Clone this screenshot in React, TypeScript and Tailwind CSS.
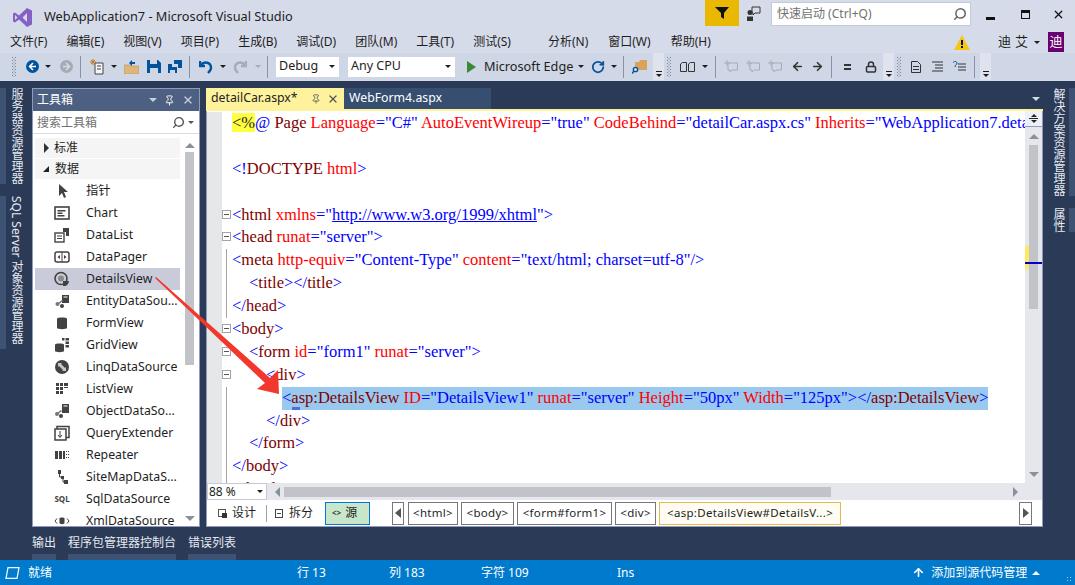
import React from "react";
import { Search, X, Pin, ArrowLeft, ArrowRight, ArrowUp, RotateCw, Lock } from "lucide-react";

const b = "text-[#0000ff]";
const m = "text-[#800000]";
const r = "text-[#ff0000]";

type Tok = [string, string];
type Fold = "box" | "line" | "end" | "none";

const codeLines: { indent: string; fold: Fold; toks: Tok[] }[] = [
  {
    indent: "pl-0",
    fold: "none",
    toks: [
      [b, "@"], [m, " Page"], [r, " Language"], [b, '="C#"'], [r, " AutoEventWireup"], [b, '="true"'],
      [r, " CodeBehind"], [b, '="detailCar.aspx.cs"'], [r, " Inherits"], [b, '="WebApplication7.detailCar" %>'],
    ],
  },
  { indent: "pl-0", fold: "none", toks: [] },
  { indent: "pl-0", fold: "none", toks: [[b, "<!"], [m, "DOCTYPE"], [r, " html"], [b, ">"]] },
  { indent: "pl-0", fold: "none", toks: [] },
  { indent: "pl-0", fold: "box", toks: [[b, "<"], [m, "html"], [r, " xmlns"], [b, '="'], [b + " underline", "http://www.w3.org/1999/xhtml"], [b, '">']] },
  { indent: "pl-0", fold: "box", toks: [[b, "<"], [m, "head"], [r, " runat"], [b, '="server">']] },
  { indent: "pl-0", fold: "line", toks: [[b, "<"], [m, "meta"], [r, " http-equiv"], [b, '="Content-Type"'], [r, " content"], [b, '="text/html; charset=utf-8"/>']] },
  { indent: "pl-[17px]", fold: "line", toks: [[b, "<"], [m, "title"], [b, "></"], [m, "title"], [b, ">"]] },
  { indent: "pl-0", fold: "end", toks: [[b, "</"], [m, "head"], [b, ">"]] },
  { indent: "pl-0", fold: "box", toks: [[b, "<"], [m, "body"], [b, ">"]] },
  { indent: "pl-[17px]", fold: "box", toks: [[b, "<"], [m, "form"], [r, " id"], [b, '="form1"'], [r, " runat"], [b, '="server">']] },
  { indent: "pl-[34px]", fold: "box", toks: [[b, "<"], [m, "div"], [b, ">"]] },
  { indent: "pl-[50px]", fold: "line", toks: [] },
  { indent: "pl-[34px]", fold: "end", toks: [[b, "</"], [m, "div"], [b, ">"]] },
  { indent: "pl-[17px]", fold: "end", toks: [[b, "</"], [m, "form"], [b, ">"]] },
  { indent: "pl-0", fold: "end", toks: [[b, "</"], [m, "body"], [b, ">"]] },
  { indent: "pl-0", fold: "line", toks: [[b, "</"], [m, "html"], [b, ">"]] },
];

const selToks: Tok[] = [
  [b, "<"], [m, "asp:DetailsView"], [r, " ID"], [b, '="DetailsView1"'], [r, " runat"], [b, '="server"'],
  [r, " Height"], [b, '="50px"'], [r, " Width"], [b, '="125px"></'], [m, "asp:DetailsView"], [b, ">"],
];

function Caret({ className = "", color = "border-t-[#1e1e1e]" }: { className?: string; color?: string }) {
  return <div className={`w-0 h-0 border-x-[3px] border-x-transparent border-t-[3px] ${color} ${className}`} />;
}

function BigCaret({ className = "", color = "border-t-[#1e1e1e]" }: { className?: string; color?: string }) {
  return <div className={`w-0 h-0 border-x-[4px] border-x-transparent border-t-[4px] ${color} ${className}`} />;
}

function Sep({ className = "" }: { className?: string }) {
  return <div className={`w-px h-[22px] bg-[#8a92a5] ${className}`} />;
}

function Gripper({ className = "" }: { className?: string }) {
  return (
    <svg className={className} width="5" height="20" viewBox="0 0 5 20">
      {[0, 3, 6, 9, 12, 15, 18].map((y) => (
        <g key={y} fill="#7d879c">
          <rect x="0" y={y} width="1" height="1" />
          <rect x="3" y={y} width="1" height="1" />
          <rect x="1.5" y={y + 1.5} width="1" height="1" />
        </g>
      ))}
    </svg>
  );
}

function Overflow({ className = "" }: { className?: string }) {
  return (
    <div className={`w-[11px] h-[27px] bg-[#dfe3ee] flex flex-col items-center justify-end pb-[3px] gap-[2px] ${className}`}>
      <div className="w-[6px] h-px bg-[#1e1e1e]" />
      <Caret />
    </div>
  );
}

function ToolIcon({ name }: { name: string }) {
  const f = "#424242";
  const shapes: Record<string, React.ReactNode> = {
    pointer: <path d="M5 1v12l3-3 2 5 2-1-2-5h4z" fill={f} />,
    chart: (
      <g>
        <rect x="1" y="2" width="14" height="12" fill="none" stroke={f} strokeWidth="1.6" />
        <path d="M3.5 5h8v1.5h-8zM3.5 7.5h5V9h-5zM3.5 10h7v1.5h-7z" fill={f} />
      </g>
    ),
    datalist: (
      <g>
        <rect x="1" y="6" width="9" height="9" fill="none" stroke={f} strokeWidth="1.4" />
        <path d="M3 8.5h5v1H3zM3 11h5v1H3z" fill={f} />
        <path d="M9 1h6v8h-3V5H9z" fill={f} />
      </g>
    ),
    pager: (
      <g>
        <rect x="1" y="3" width="14" height="10" rx="2" fill="none" stroke={f} strokeWidth="1.5" />
        <path d="M8 3v10" stroke={f} />
        <path d="M6 6v4L3.5 8zM10 6v4l2.5-2z" fill={f} />
      </g>
    ),
    details: (
      <g>
        <circle cx="7" cy="7.5" r="6" fill="none" stroke={f} strokeWidth="1.6" />
        <circle cx="7" cy="7.5" r="3" fill="#8a8a8a" />
        <path d="M9 10h6a5 5 0 0 1-6 5z" fill={f} />
      </g>
    ),
    entity: (
      <g>
        <path d="M8 2h7v8H8z" fill={f} />
        <rect x="9.5" y="3.5" width="4" height="1" fill="#fff" />
        <circle cx="3.5" cy="11" r="2" fill="#777" />
        <circle cx="8" cy="13" r="2" fill={f} />
        <path d="M4 10l4-3 1 1-4 3z" fill="#777" />
      </g>
    ),
    form: <path d="M3 3.5C3 2 13 2 13 3.5v9.5c0 1.500-10 1.500-10 0z" fill={f} />,
    grid: (
      <g>
        <path d="M1 7.500C1 6 10 6 10 7.500V14c0 1.500-9 1.500-9 0z" fill={f} />
        <path d="M8 1h2.500v2.500H8zM11.500 1H15v2.500h-3.500zM11.500 4.500H15V7h-3.500zM11.500 8H15v2.500h-3.500z" fill={f} />
      </g>
    ),
    linq: (
      <g>
        <circle cx="8" cy="8" r="7" fill={f} />
        <path d="M4 4l4 0-1 1 4 4 1-1 0 4-4 0 1-1-4-4-1 1z" fill="#c8c8c8" />
      </g>
    ),
    list: <path d="M2 2h3v3H2zM6 2h3v3H6zM10 2h4v3h-4zM2 6h3v3H2zM6 6h3v3H6zM10 6h4v1h-4zM2 10h3v3H2zM6 10h3v3H6z" fill={f} />,
    object: (
      <g>
        <path d="M8 1h7v9H8z" fill={f} />
        <rect x="9.500" y="2.500" width="4" height="1" fill="#fff" />
        <circle cx="3" cy="11" r="2" fill="#777" />
        <circle cx="7" cy="13" r="2" fill={f} />
        <path d="M3 10l4-3 1 1-4 3z" fill="#777" />
      </g>
    ),
    query: (
      <g>
        <rect x="3" y="1.500" width="12" height="11" fill="none" stroke={f} strokeWidth="1.500" />
        <rect x="1" y="4" width="11" height="11" fill="#fff" stroke={f} strokeWidth="1.500" />
        <path d="M6 6v6M4 10l2 2.500L8 10" stroke={f} fill="none" />
      </g>
    ),
    repeater: <path d="M1 4h3v8H1zM5 4h3v8H5zM9 4h2v8H9zM12 4h1v1h-1zM14 4h1v1h-1zM12 7h1v1h-1zM14 7h1v1h-1zM12 10h1v1h-1zM14 10h1v1h-1z" fill={f} />,
    sitemap: (
      <g>
        <path d="M4 1h3v4H4zM7 7h3v3H7zM10 11h4v4h-4z" fill={f} />
        <path d="M5.500 5v3H8M9 10v3h2" stroke={f} fill="none" />
      </g>
    ),
    xml: (
      <g>
        <path d="M5.500 5.500C5.500 4 10.500 4 10.500 5.500V10c0 1.500-5 1.500-5 0z" fill={f} />
        <path d="M3 5.500L1 8l2 2.500M13 5.500L15 8l-2 2.500" stroke={f} fill="none" />
      </g>
    ),
  };
  return (
    <svg width="16" height="16" viewBox="0 0 16 16">
      {shapes[name]}
    </svg>
  );
}

const toolItems: { icon: string; label: string; selected?: boolean }[] = [
  { icon: "pointer", label: "指针" },
  { icon: "chart", label: "Chart" },
  { icon: "datalist", label: "DataList" },
  { icon: "pager", label: "DataPager" },
  { icon: "details", label: "DetailsView", selected: true },
  { icon: "entity", label: "EntityDataSou..." },
  { icon: "form", label: "FormView" },
  { icon: "grid", label: "GridView" },
  { icon: "linq", label: "LinqDataSource" },
  { icon: "list", label: "ListView" },
  { icon: "object", label: "ObjectDataSo..." },
  { icon: "query", label: "QueryExtender" },
  { icon: "repeater", label: "Repeater" },
  { icon: "sitemap", label: "SiteMapDataS..." },
  { icon: "sql", label: "SqlDataSource" },
  { icon: "xml", label: "XmlDataSource" },
];

const menus = ["文件(F)", "编辑(E)", "视图(V)", "项目(P)", "生成(B)", "调试(D)", "团队(M)", "工具(T)", "测试(S)"];
const menus2 = ["分析(N)", "窗口(W)", "帮助(H)"];
const crumbs = [
  { text: "<html>", w: "w-[50px]" },
  { text: "<body>", w: "w-[53px]" },
  { text: "<form#form1>", w: "w-[95px]" },
  { text: "<div>", w: "w-[41px]" },
];

function VerticalTab({ text, height, side }: { text: string; height: string; side: "left" | "right" }) {
  return (
    <div className={`flex ${height} ${side === "left" ? "flex-row" : "flex-row-reverse"}`}>
      <div className="w-[6px] h-full bg-[#3e5273]" />
      <div className={`w-[20px] text-[12px] leading-[20px] text-[#e6e9f0] [writing-mode:vertical-rl] whitespace-nowrap ${side === "left" ? "ml-0" : "mr-[1px]"}`}>{text}</div>
    </div>
  );
}

function FoldCell({ fold }: { fold: Fold }) {
  if (fold === "none") return <div className="w-[10px] shrink-0" />;
  return (
    <div className="w-[10px] shrink-0 h-full flex flex-col items-center">
      {fold === "box" ? (
        <div className="w-[9px] h-[9px] mt-[6px] mr-[2px] border border-[#a5a5a5] bg-white flex items-center justify-center shrink-0">
          <div className="w-[5px] h-px bg-[#555]" />
        </div>
      ) : (
        <div className="w-px h-full bg-[#a5a5a5] mr-[2px]" />
      )}
    </div>
  );
}

export default function App() {
  return (
    <div className="w-[1075px] h-[585px] overflow-hidden relative flex flex-col bg-[#d6dbe9] text-[#1e1e1e] text-[12px] [font-family:'Noto_Sans','Noto_Sans_CJK_SC',sans-serif]">
      {/* title bar */}
      <div className="h-[31px] flex items-start shrink-0">
        <svg className="ml-[12px] mt-[7px]" width="21" height="21" viewBox="0 0 21 21">
          <path d="M15 1l5 2.500v14L15 20 7 12.500 3 15.500 1 14.500V6.500l2-1 4 3zM15 6l-4.500 4.500L15 15z" fill="#8661c5" fillRule="evenodd" />
          <path d="M3 8v5l2.500-2.500z" fill="#d6dbe9" />
        </svg>
        <div className="ml-[11px] mt-[6px] text-[12.750px] leading-[20px]">WebApplication7 - Microsoft Visual Studio</div>
        <div className="ml-auto w-[34px] h-[26px] bg-[#e8b900] flex items-center justify-center">
          <svg width="14" height="14" viewBox="0 0 14 14">
            <path d="M0 1h14L9 7v6L6 11V7z" fill="#111" />
          </svg>
        </div>
        <svg className="ml-[7px] mt-[6px]" width="15" height="15" viewBox="0 0 15 15">
          <circle cx="4" cy="6.500" r="2.500" fill="#333" />
          <path d="M1 15v-4.500h6V15z" fill="#333" />
          <path d="M6 1h8v6H9l-2 2V7H6z" fill="none" stroke="#333" />
        </svg>
        <div className="ml-[10px] mt-[2px] w-[200px] h-[24px] bg-white border border-[#c4cad8] flex items-center pl-[5px] pr-[3px]">
          <span className="text-[#717171] text-[12px]">快速启动 (Ctrl+Q)</span>
          <Search className="ml-auto -scale-x-100" size={14} strokeWidth={2.6} color="#666" />
        </div>
        <div className="ml-[15px] mt-[17px] w-[9px] h-[3px] bg-[#111]" />
        <div className="ml-[26px] mt-[10px] w-[9px] h-[9px] border border-[#111] border-t-[3px]" />
        <X className="ml-[22px] mt-[8px]" size={13} strokeWidth={2.2} color="#111" />
        <div className="w-[10px]" />
      </div>

      {/* menu bar */}
      <div className="h-[22px] flex items-center shrink-0 pl-[10px]">
        <div className="flex gap-[19px]">
          {menus.map((t) => (
            <span key={t} className="whitespace-nowrap">{t}</span>
          ))}
        </div>
        <div className="flex gap-[20px] ml-[37px]">
          {menus2.map((t) => (
            <span key={t} className="whitespace-nowrap">{t}</span>
          ))}
        </div>
        <svg className="ml-auto" width="16" height="15" viewBox="0 0 16 15">
          <path d="M8 0l8 15H0z" fill="#f5c518" />
          <path d="M7 5h2v5H7zM7 11h2v2H7z" fill="#111" />
        </svg>
        <span className="ml-[28px] tracking-[4px] text-[13px]">迪艾</span>
        <Caret className="ml-[2px]" />
        <div className="ml-[8px] w-[16px] h-[20px] bg-[#68006f] text-white text-[13px] flex items-center justify-center">迪</div>
        <div className="w-[11px]" />
      </div>

      {/* toolbar */}
      <div className="h-[27px] mb-[1px] flex items-center shrink-0 bg-[#cfd6e5]">
        <Gripper className="ml-[12px]" />
        <svg className="ml-[9px]" width="13" height="13" viewBox="0 0 13 13">
          <circle cx="6.500" cy="6.500" r="6.500" fill="#00539c" />
          <path d="M7 3L3.500 6.500 7 10M4 6.500h6" stroke="#fff" strokeWidth="1.500" fill="none" />
        </svg>
        <Caret className="ml-[6px]" />
        <svg className="ml-[9px]" width="13" height="13" viewBox="0 0 13 13">
          <circle cx="6.500" cy="6.500" r="6.500" fill="#a7abb5" />
          <path d="M6 3l3.500 3.500L6 10M9 6.500H3" stroke="#d6dbe9" strokeWidth="1.500" fill="none" />
        </svg>
        <Sep className="ml-[7px]" />
        <svg className="ml-[9px]" width="14" height="16" viewBox="0 0 14 16">
          <path d="M5 4h8v11H5z" fill="#f6f6f6" stroke="#424242" />
          <path d="M7 7h4M7 10h4" stroke="#424242" />
          <path d="M3 0v6M0 3h6M1 1l4 4M5 1L1 5" stroke="#c27d1a" />
        </svg>
        <Caret className="ml-[7px]" />
        <svg className="ml-[7px]" width="15" height="14" viewBox="0 0 15 14">
          <path d="M0 5h6l1 1h8v8H0z" fill="#dcb67a" stroke="#b08a4c" strokeWidth=".5" />
          <path d="M5 3l3-3v2h3v2H8v2z" fill="#00539c" />
        </svg>
        <svg className="ml-[8px]" width="14" height="13" viewBox="0 0 14 13">
          <path d="M0 0h11l3 3v10H0z" fill="#00539c" />
          <path d="M3 0h7v4H3zM3 8h8v5H3z" fill="#cfd6e5" />
        </svg>
        <svg className="ml-[7px]" width="14" height="13" viewBox="0 0 14 13">
          <path d="M0 4h4V7h5v6H0z" fill="#00539c" />
          <path d="M6 0h8v8h-4V4H6z" fill="#00539c" />
          <path d="M2 10h5v3H2z" fill="#cfd6e5" />
        </svg>
        <Sep className="ml-[7px]" />
        <svg className="ml-[9px]" width="14" height="15" viewBox="0 0 14 15">
          <path d="M1 2v5h5M2 6c3-4 10-3 10 3 0 2-1 3-3 5" stroke="#00539c" strokeWidth="2.400" fill="none" />
        </svg>
        <Caret className="ml-[7px]" />
        <svg className="ml-[7px]" width="14" height="15" viewBox="0 0 14 15">
          <path d="M13 2v5H8M12 6C9 2 2 3 2 9c0 2 1 3 3 5" stroke="#a7abb5" strokeWidth="2.400" fill="none" />
        </svg>
        <Caret className="ml-[8px]" color="border-t-[#a7abb5]" />
        <Sep className="ml-[6px]" />
        <div className="ml-[7px] w-[65px] h-[22px] bg-white border border-[#cfd6e5] flex items-center pl-[3px] pr-[4px] text-[12.500px]">
          Debug
          <Caret className="ml-auto" />
        </div>
        <div className="ml-[7px] w-[109px] h-[22px] bg-white border border-[#cfd6e5] flex items-center pl-[3px] pr-[4px] text-[12.500px]">
          Any CPU
          <Caret className="ml-auto" />
        </div>
        <div className="ml-[11px] w-0 h-0 border-y-[6px] border-y-transparent border-l-[9px] border-l-[#388a34]" />
        <span className="ml-[8px] text-[12.700px] whitespace-nowrap w-[91px]">Microsoft Edge</span>
        <Caret className="ml-[3px]" />
        <RotateCw className="ml-[7px]" size={14} strokeWidth={3} color="#00539c" />
        <Caret className="ml-[6px]" />
        <Sep className="ml-[6px]" />
        <svg className="ml-[8px]" width="15" height="15" viewBox="0 0 15 15">
          <path d="M3 3h4l1-2h7v10H5V8H3z" fill="#d9a35b" />
          <circle cx="3.500" cy="10.500" r="2.200" fill="none" stroke="#00539c" strokeWidth="1.300" />
          <path d="M2 12l-2 2.500" stroke="#00539c" strokeWidth="1.500" />
        </svg>
        <Overflow className="ml-[6px]" />
        <Gripper className="ml-[3px]" />
        <svg className="ml-[8px]" width="15" height="10" viewBox="0 0 15 10">
          <path d="M.5 9.500V2l2-1.500h4v9zM8.500 9.500V2l2-1.500h4v9z" fill="none" stroke="#333" />
        </svg>
        <Caret className="ml-[7px]" />
        <Sep className="ml-[7px]" />
        {[0, 1, 2].map((i) => (
          <svg key={i} className="ml-[8px]" width="14" height="13" viewBox="0 0 14 13">
            <path d="M4 3h9.500v7H8l-2 2v-2H4z" fill="none" stroke="#a7abb5" />
            <path d="M0 3h6M3 0v6" stroke="#a7abb5" />
          </svg>
        ))}
        <ArrowLeft className="ml-[9px]" size={13} strokeWidth={3} color="#333" />
        <ArrowRight className="ml-[7px]" size={13} strokeWidth={3} color="#333" />
        <Sep className="ml-[7px]" />
        <div className="ml-[12px] w-[7px] h-[6px] border-y-2 border-[#333]" />
        <Lock className="ml-[14px]" size={12} strokeWidth={3} color="#333" />
        <Overflow className="ml-[6px]" />
        <Gripper className="ml-[3px]" />
        <svg className="ml-[9px]" width="10" height="12" viewBox="0 0 10 12">
          <path d="M.5.500h6l3 3v8h-9z" fill="none" stroke="#333" />
          <path d="M2 5h6v1H2zM2 8h6v1H2z" fill="#333" />
        </svg>
        <svg className="ml-[11px]" width="11" height="11" viewBox="0 0 11 11">
          <path d="M0 1h11M3 4h8M3 7h8M0 10h11" stroke="#333" />
        </svg>
        <svg className="ml-[10px]" width="13" height="11" viewBox="0 0 13 11">
          <path d="M5 3h8M5 6h8M5 9h8" stroke="#333" />
          <path d="M0 2c0-2 4-2 4 0s-2 1.500-2 4" stroke="#00539c" fill="none" />
        </svg>
        <Sep className="ml-[8px]" />
        <Overflow className="ml-[5px]" />
      </div>

      {/* main dark area */}
      <div className="flex-1 min-h-0 flex bg-[#2a3a57]">
        <div className="w-[32px] shrink-0 flex flex-col pt-[7px] gap-[12px]">
          <VerticalTab text="服务器资源管理器" height="h-[96px]" side="left" />
          <VerticalTab text="SQL Server 对象资源管理器" height="h-[153px]" side="left" />
        </div>

        <div className="flex-1 min-w-0 flex flex-col">
          <div className="h-[439px] mt-[7px] flex shrink-0">
            {/* toolbox */}
            <div className="w-[168px] shrink-0 flex flex-col border border-[#8e9bbc] bg-white">
              <div className="h-[22px] bg-[#4d6082] flex items-center pl-[4px] pr-[5px] text-white text-[12px] shrink-0">
                <span>工具箱</span>
                <BigCaret className="ml-auto" color="border-t-[#c9d0de]" />
                <Pin className="ml-[7px]" size={11} color="#fff" />
                <X className="ml-[7px]" size={12} strokeWidth={2.5} color="#c9d0de" />
              </div>
              <div className="h-[22px] mt-px bg-white border-b border-[#d6dbe9] flex items-center pl-[4px] pr-[5px] shrink-0">
                <span className="text-[#717171]">搜索工具箱</span>
                <Search className="ml-auto -scale-x-100" size={13} strokeWidth={2.6} color="#555" />
                <Caret className="ml-[3px]" color="border-t-[#555]" />
              </div>
              <div className="flex-1 min-h-0 flex pt-[4px] pl-[2px] bg-white">
                <div className="w-[145px] shrink-0 overflow-hidden">
                  <div className="h-[20px] mb-px bg-[#f5f5f5] flex items-center pl-[9px]">
                    <div className="w-0 h-0 border-y-[5px] border-y-transparent border-l-[5px] border-l-[#333]" />
                    <span className="ml-[5px]">标准</span>
                  </div>
                  <div className="h-[20px] mb-px bg-[#f5f5f5] flex items-center pl-[8px]">
                    <div className="w-0 h-0 border-l-[6px] border-l-transparent border-b-[6px] border-b-[#222]" />
                    <span className="ml-[6px]">数据</span>
                  </div>
                  {toolItems.map((t) => (
                    <div key={t.label} className={`h-[22px] flex items-center pl-[19px] whitespace-nowrap text-[12.300px] ${t.selected ? "bg-[#c9cbdb]" : ""}`}>
                      <div className="w-[16px] h-[16px] flex items-center justify-center shrink-0">
                        {t.icon === "sql" ? (
                          <span className="text-[8px] font-bold text-[#424242]">SQL</span>
                        ) : (
                          <ToolIcon name={t.icon} />
                        )}
                      </div>
                      <span className="ml-[16px]">{t.label}</span>
                    </div>
                  ))}
                </div>
                <div className="flex-1 flex flex-col items-center pt-[5px] pl-[2px] pr-[2px]">
                  <div className="w-0 h-0 border-x-[5px] border-x-transparent border-b-[5px] border-b-[#8a8f9c]" />
                  <div className="w-[9px] h-[213px] mt-[4px] bg-[#c2c3c9]" />
                  <div className="mt-auto mb-[5px] w-0 h-0 border-x-[5px] border-x-transparent border-t-[5px] border-t-[#8a8f9c]" />
                </div>
              </div>
            </div>

            {/* editor */}
            <div className="ml-[6px] w-[837px] shrink-0 flex flex-col">
              <div className="h-[21px] flex shrink-0 items-stretch">
                <div className="w-[138px] bg-[#fff29d] flex items-center pl-[5px] text-[12.300px] text-[#1e1e1e]">
                  <span>detailCar.aspx*</span>
                  <Pin className="ml-[13px]" size={10} color="#555" />
                  <X className="ml-[6px]" size={12} strokeWidth={2.5} color="#555" />
                </div>
                <div className="w-[147px] bg-[#364e6f] flex items-center pl-[5px] text-white text-[12.300px]">WebForm4.aspx</div>
                <BigCaret className="ml-auto mr-[3px] self-center" color="border-t-[#d6dbe9]" />
              </div>
              <div className="h-[2px] bg-[#fff29d] shrink-0" />
              <div className="flex-1 min-h-0 flex flex-col border-x border-b border-[#8e9bbc] bg-white">
                <div className="h-[372px] shrink-0 flex">
                  <div className="flex-1 min-w-0 overflow-hidden relative">
                    <div className="w-[2000px] pt-px text-[16.500px] leading-[22.900px] [font-family:'Liberation_Serif',serif]">
                      {codeLines.map((line, i) => (
                        <div key={i} className="h-[22.900px] flex">
                          <div className="w-[15px] shrink-0 bg-[#e6e7e8]" />
                          <FoldCell fold={line.fold} />
                          <div className={`whitespace-pre ${line.indent}`}>
                            {i === 0 && <span className="bg-[#ffff40]">{"<%"}</span>}
                            {i === 12 ? (
                              <span className="bg-[#99c9ef] inline-block h-[23px]">
                                {selToks.map((t, j) => (
                                  <span key={j} className={t[0]}>{t[1]}</span>
                                ))}
                              </span>
                            ) : (
                              line.toks.map((t, j) => (
                                <span key={j} className={t[0]}>{t[1]}</span>
                              ))
                            )}
                          </div>
                        </div>
                      ))}
                    </div>
                    <div className="absolute left-[85px] top-[296px] w-[8px] h-[3px] bg-[#4a6ee0]" />
                  </div>
                  <div className="w-[17px] shrink-0 bg-[#e6e7ed] flex flex-col items-center relative">
                    <div className="w-[17px] h-[16px] bg-[#eef0f7] border-b border-[#8e9bbc] flex flex-col items-center justify-center gap-px">
                      <div className="w-0 h-0 border-x-[3px] border-x-transparent border-b-[3px] border-b-[#222]" />
                      <div className="w-[9px] h-px bg-[#222]" />
                      <div className="w-0 h-0 border-x-[3px] border-x-transparent border-t-[3px] border-t-[#222]" />
                    </div>
                    <div className="mt-[7px] w-0 h-0 border-x-[5px] border-x-transparent border-b-[5px] border-b-[#8a8f9c]" />
                    <div className="mt-[6px] w-[9px] h-[164px] bg-[#c2c3c9]" />
                    <div className="mt-auto mb-[6px] w-0 h-0 border-x-[5px] border-x-transparent border-t-[5px] border-t-[#8a8f9c]" />
                    <div className="absolute left-0 top-[135px] w-[4px] h-[23px] bg-[#ffe866]" />
                    <div className="absolute left-0 top-[151px] w-[17px] h-[2px] bg-[#0000c8]" />
                  </div>
                </div>
                <div className="h-[17px] shrink-0 bg-[#e6e7ed] flex items-center">
                  <div className="w-[60px] h-[17px] bg-white border border-[#c4cad8] flex items-center pl-[1px] pr-[3px] text-[12px]">
                    88 %
                    <Caret className="ml-auto" />
                  </div>
                  <div className="ml-[8px] w-0 h-0 border-y-[5px] border-y-transparent border-r-[5px] border-r-[#8a8f9c]" />
                  <div className="ml-[4px] w-[547px] h-[10px] bg-[#c2c3c9]" />
                  <div className="ml-auto mr-[24px] w-0 h-0 border-y-[5px] border-y-transparent border-l-[5px] border-l-[#8a8f9c]" />
                </div>
                <div className="flex-1 min-h-0 bg-white flex items-center pl-[11px]">
                  <svg width="9" height="9" viewBox="0 0 9 9">
                    <rect x=".5" y=".5" width="7" height="7" fill="none" stroke="#555" />
                    <rect x="4" y="4" width="5" height="5" fill="#333" />
                  </svg>
                  <span className="ml-[5px] text-[12px]">设计</span>
                  <div className="ml-[10px] w-px h-[17px] bg-[#a0a0a0]" />
                  <svg className="ml-[8px]" width="8" height="9" viewBox="0 0 8 9">
                    <rect x=".5" y=".5" width="7" height="8" fill="none" stroke="#444" />
                    <path d="M2 4.500h4" stroke="#444" />
                  </svg>
                  <span className="ml-[6px] text-[12px]">拆分</span>
                  <div className="ml-[12px] w-[45px] h-[23px] bg-[#c8e6c9] border border-[#0078d7] flex items-center pl-[6px] text-[12px]">
                    <span className="text-[8px] font-bold text-[#444] leading-none">&lt;&gt;</span>
                    <span className="ml-[4px]">源</span>
                  </div>
                  <div className="ml-[22px] w-[12px] h-[23px] border border-[#777] flex items-center justify-center">
                    <div className="w-0 h-0 border-y-[5px] border-y-transparent border-r-[6px] border-r-[#555]" />
                  </div>
                  <div className="ml-[4px] flex gap-[3px] text-[11.500px] tracking-[0.3px]">
                    {crumbs.map((c) => (
                      <div key={c.text} className={`${c.w} h-[23px] border border-[#777] flex items-center justify-center`}>{c.text}</div>
                    ))}
                    <div className="w-[182px] h-[23px] border border-[#e8b84b] bg-[#fffdf3] flex items-center justify-center whitespace-nowrap">&lt;asp:DetailsView#DetailsV...&gt;</div>
                  </div>
                  <div className="ml-auto mr-[10px] w-[13px] h-[23px] border border-[#777] flex items-center justify-center">
                    <div className="w-0 h-0 border-y-[5px] border-y-transparent border-l-[6px] border-l-[#555]" />
                  </div>
                </div>
              </div>
            </div>
          </div>

          {/* bottom tool window tabs */}
          <div className="flex-1 flex gap-[12px] text-[12px] text-[#e6e9f0]">
            {["输出", "程序包管理器控制台", "错误列表"].map((t) => (
              <div key={t} className="flex flex-col">
                <div className="h-[26px] leading-[32px] whitespace-nowrap">{t}</div>
                <div className="h-[6px] mt-auto bg-[#3e5273]" />
              </div>
            ))}
          </div>
        </div>

        <div className="w-[32px] shrink-0 flex flex-col pt-[7px] gap-[12px]">
          <VerticalTab text="解决方案资源管理器" height="h-[108px]" side="right" />
          <VerticalTab text="属性" height="h-[24px]" side="right" />
        </div>
      </div>

      {/* status bar */}
      <div className="h-[25px] shrink-0 bg-[#007acc] text-white flex items-center text-[12px]">
        <svg className="ml-[5px]" width="15" height="12" viewBox="0 0 15 12">
          <path d="M3 .7h11L12 11.300H1z" fill="none" stroke="#fff" strokeWidth="1.200" />
        </svg>
        <span className="ml-[8px] w-[269px]">就绪</span>
        <span className="w-[92px]">行 13</span>
        <span className="w-[92px]">列 183</span>
        <span className="w-[136px]">字符 109</span>
        <span>Ins</span>
        <ArrowUp className="ml-[278px]" size={13} strokeWidth={3} color="#fff" />
        <span className="ml-[6px]">添加到源代码管理</span>
        <div className="ml-[5px] w-0 h-0 border-x-[4px] border-x-transparent border-b-[4px] border-b-white" />
        <div className="absolute right-[2px] bottom-[2px] w-[7px] h-[7px] [background-image:radial-gradient(#9cd0ee_1px,transparent_1px)] [background-size:3px_3px]" />
      </div>

      {/* annotation arrow */}
      <svg className="absolute left-0 top-0 pointer-events-none" width="1075" height="585" viewBox="0 0 1075 585">
        <polygon points="155,278 156,277 270,378 278,370 279,394 257,389 265,383" fill="#f2382c" />
      </svg>
    </div>
  );
}
